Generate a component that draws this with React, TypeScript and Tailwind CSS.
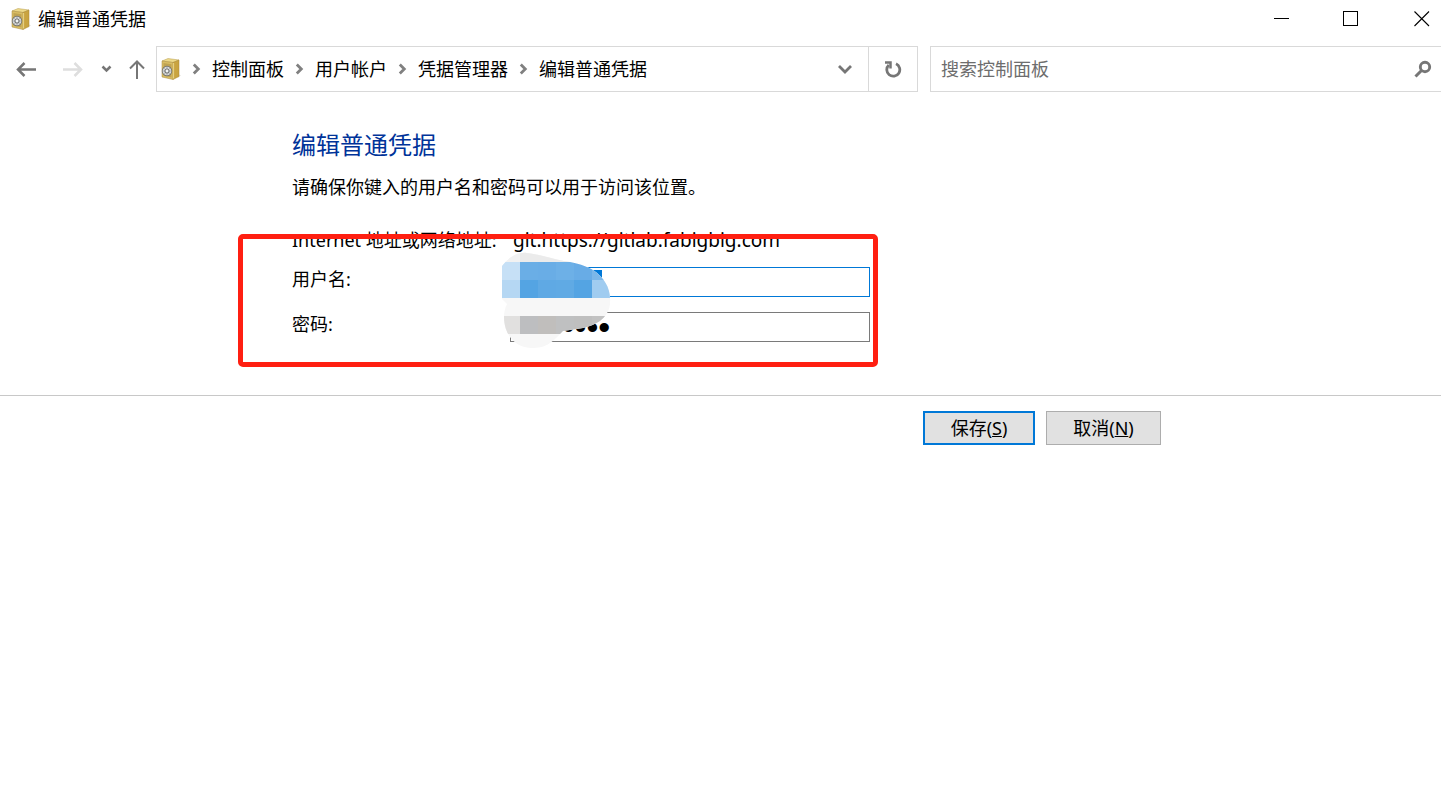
import React, { useState } from "react";

function SafeIcon() {
  return (
    <svg width="20" height="22" viewBox="0 0 20 22" aria-hidden="true" className="shrink-0">
      <path d="M17 19.5 20 17.5 17 16Z" fill="#e4e2dc" />
      <path d="M1 3 7 .5 18 2 12 4.500Z" fill="#ecd98a" stroke="#b99c4a" strokeWidth=".5" />
      <path d="M12 4.500 18 2V18.500L12 21.500Z" fill="#c9a440" stroke="#a98632" strokeWidth=".5" />
      <path d="M1 3 12 4.500V21.500L1 19Z" fill="#d9bd63" stroke="#a88a3e" strokeWidth=".5" />
      <path d="M2.500 5 10.500 6.200V19.500L2.500 17.500Z" fill="#bfa352" />
      <path d="M12.600 5V20.500" stroke="#f4e3a0" strokeWidth=".8" />
      <circle cx="6" cy="13" r="5.200" fill="#77766f" />
      <circle cx="6" cy="13" r="4.300" fill="#dcdede" />
      <circle cx="6" cy="13" r="2.600" fill="#8b8d8c" />
      <path d="M6 9.200V16.800M2.400 13H9.600M3.500 10.500 8.500 15.500M8.500 10.500 3.500 15.500" stroke="#6c6d6b" strokeWidth=".6" />
      <circle cx="6" cy="13" r="1.400" fill="#f1f3f3" />
    </svg>
  );
}

function Crumb({ children }: { children: string }) {
  return (
    <li className="flex items-center">
      <svg width="9" height="12" viewBox="0 0 9 12" aria-hidden="true" className="mx-2">
        <path d="M1.800 1.500 6.300 6 1.800 10.500" fill="none" stroke="#808080" strokeWidth="2.800" />
      </svg>
      <a href="#" className="px-[3px] text-black">{children}</a>
    </li>
  );
}

const tiles: [number, number, string][] = [
  [0, 10, "#c6e0f6"], [18, 10, "#6aaee6"], [36, 10, "#69ade6"], [54, 10, "#6db0e7"], [72, 10, "#68ace6"], [90, 10, "#7bb7e9"],
  [0, 28, "#b5d7f3"], [18, 28, "#54a4e3"], [36, 28, "#5fa9e4"], [54, 28, "#60aae4"], [72, 28, "#54a4e3"], [90, 28, "#a0ccf0"],
  [0, 64, "#e1e0df"], [18, 64, "#bdbec0"], [36, 64, "#c0bebc"], [54, 64, "#bfc0c1"], [72, 64, "#bfbfbf"], [90, 64, "#c2c2c2"],
];

function Mosaic() {
  return (
    <svg width="110" height="98" viewBox="0 0 110 98" aria-hidden="true" className="pointer-events-none absolute -left-2 -top-[60px]">
      <defs>
        <clipPath id="smudge">
          <path d="M0 14C7 5 15 0 25 1C36 2 48 6 62 9C76 11 84 14 91 18C102 25 108 36 108 46C109 58 104 64 98 69C88 76 75 77 61 79C53 87 46 96 32 96C15 97 2 84 2 65C2 60 3 56 5 52L0 47Z" />
        </clipPath>
      </defs>
      <g clipPath="url(#smudge)">
        <rect width="110" height="98" fill="#f7f7f7" />
        <rect width="18" height="10" fill="#f2f2f2" />
        <rect x="18" width="90" height="10" fill="#ebebeb" />
        {tiles.map(([x, y, fill]) => (
          <rect key={`${x}-${y}`} x={x} y={y} width="18" height="18" fill={fill} />
        ))}
      </g>
    </svg>
  );
}

export default function App() {
  const [user, setUser] = useState("");
  const [password, setPassword] = useState("password");

  return (
    <div className="min-h-screen bg-white font-['Noto_Sans','Noto_Sans_CJK_SC',sans-serif] text-[18px] leading-6 text-black">
      <header>
        <div className="flex h-[37px] items-center pl-[11px]">
          <SafeIcon />
          <h1 className="ml-[7px]">编辑普通凭据</h1>
          <div className="ml-auto flex">
            <button aria-label="最小化" className="flex h-[37px] w-[69px] items-center justify-center">
              <svg width="16" height="16" viewBox="0 0 16 16"><path d="M0 7.500H15" stroke="black" /></svg>
            </button>
            <button aria-label="最大化" className="flex h-[37px] w-[69px] items-center justify-center">
              <svg width="16" height="16" viewBox="0 0 16 16" shapeRendering="crispEdges"><path d="M.5.5H14.500V14.500H.5Z" fill="none" stroke="black" /></svg>
            </button>
            <button aria-label="关闭" className="flex h-[37px] w-[56px] items-center justify-end pr-[11px]">
              <svg width="16" height="16" viewBox="0 0 16 16"><path d="M.5.5 15 15M15 .5.5 15" stroke="black" strokeWidth="1.100" /></svg>
            </button>
          </div>
        </div>

        <div className="mt-[9px] flex h-[46px] items-stretch">
          <nav aria-label="导航" className="flex w-[156px] shrink-0 items-center pl-4">
            <button aria-label="后退">
              <svg width="21" height="18" viewBox="0 0 21 18" fill="none" stroke="#767676" strokeWidth="2.500"><path d="M20 9.500H2M8.500 3 2 9.500 8.500 16" /></svg>
            </button>
            <button aria-label="前进" className="ml-[25px]">
              <svg width="21" height="18" viewBox="0 0 21 18" fill="none" stroke="#dedede" strokeWidth="2.500"><path d="M1 9.500H19M12.500 3 19 9.500 12.500 16" /></svg>
            </button>
            <button aria-label="最近浏览的位置" className="ml-[18px]">
              <svg width="11" height="8" viewBox="0 0 11 8" fill="none" stroke="#767676" strokeWidth="2.500"><path d="M1.500 1.500 5.500 5.500 9.500 1.500" /></svg>
            </button>
            <button aria-label="上移" className="ml-4">
              <svg width="18" height="22" viewBox="0 0 18 22" fill="none" stroke="#767676" strokeWidth="2"><path d="M9 21V3.500M2 10.500 9 3.500 16 10.500" /></svg>
            </button>
          </nav>
          <div className="flex min-w-0 flex-1 items-stretch border border-[#d9d9d9]">
            <div className="flex min-w-0 flex-1 items-center pl-1">
              <SafeIcon />
              <ol className="flex items-center whitespace-nowrap pl-[3px]">
                <Crumb>控制面板</Crumb>
                <Crumb>用户帐户</Crumb>
                <Crumb>凭据管理器</Crumb>
                <Crumb>编辑普通凭据</Crumb>
              </ol>
              <button aria-label="以前的位置" className="ml-auto px-4">
                <svg width="14" height="10" viewBox="0 0 14 10" fill="none" stroke="#767676" strokeWidth="2.800"><path d="M1 2 7 8 13 2" /></svg>
              </button>
            </div>
            <button aria-label="刷新" className="flex w-[49px] items-center justify-center border-l border-[#d9d9d9]">
              <svg width="18" height="18" viewBox="0 0 18 18" fill="none" stroke="#767676" strokeWidth="2.800">
                <path d="M12 3.800A6.500 6.500 0 1 1 4.800 5" />
                <path d="M1 2.500H6.500V8.500" strokeWidth="2.500" />
              </svg>
            </button>
          </div>
          <label className="ml-3 flex w-[511px] items-center border-y border-l border-[#d9d9d9] pl-[10px] pr-[9px]">
            <input type="search" aria-label="搜索控制面板" placeholder="搜索控制面板" className="min-w-0 flex-1 bg-transparent outline-none placeholder:text-[#6d6d6d]" />
            <svg width="18" height="18" viewBox="0 0 18 18" fill="none" stroke="#767676" aria-hidden="true">
              <circle cx="11" cy="7" r="4.700" strokeWidth="2.900" />
              <path d="M7.500 10.500 1.500 16.500" strokeWidth="3" />
            </svg>
          </label>
        </div>
      </header>

      <main>
        <section className="pb-[53px] pl-[292px] pt-[37px]">
          <h2 className="text-[24px] leading-8 text-[#003399]">编辑普通凭据</h2>
          <p className="mt-[14px]">请确保你键入的用户名和密码可以用于访问该位置。</p>
          <form id="credential" className="relative mt-[29px] w-[578px]" onSubmit={(e) => e.preventDefault()}>
            <div className="flex h-6 whitespace-nowrap">
              <span className="w-[221px]">Internet 地址或网络地址:</span>
              <span className="text-[19px]">git:https://gitlab.fabigbig.com</span>
            </div>
            <div className="mt-[15px] flex">
              <label htmlFor="user" className="w-[218px]">用户名:</label>
              <div className="relative flex-1">
                <input id="user" value={user} onChange={(e) => setUser(e.target.value)} className="block h-[30px] w-full border border-[#0078d7] px-1 outline-none" />
                <span className="absolute left-1 top-[3px] h-6 w-[88px] bg-[#0078d7]" />
              </div>
            </div>
            <div className="mt-[15px] flex">
              <label htmlFor="password" className="w-[218px]">密码:</label>
              <div className="relative flex-1">
                <input id="password" type="password" value={password} onChange={(e) => setPassword(e.target.value)} className="block h-[30px] w-full border border-[#7a7a7a] px-1 font-['Liberation_Sans',sans-serif] text-[34px] outline-none" />
                <Mosaic />
              </div>
            </div>
            <div aria-hidden="true" className="pointer-events-none absolute -left-[54px] -right-2 top-[6px] h-[133px] rounded-[5px] border-[5px] border-[#ff1f11]" />
          </form>
        </section>

        <footer className="flex justify-end gap-[11px] border-t border-[#c8c8c8] pr-[280px] pt-[15px]">
          <button type="submit" form="credential" className="h-[34px] w-[112px] border-2 border-[#0078d7] bg-[#e1e1e1]">
            保存(<u>S</u>)
          </button>
          <button type="button" className="h-[34px] w-[115px] border border-[#adadad] bg-[#e1e1e1]">
            取消(<u>N</u>)
          </button>
        </footer>
      </main>
    </div>
  );
}
